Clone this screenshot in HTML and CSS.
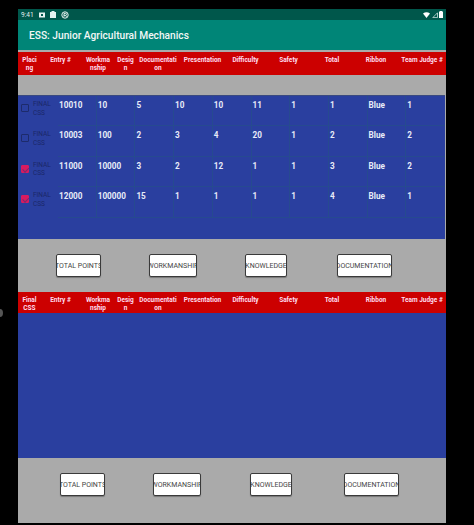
FILE: index.html
```html
<!DOCTYPE html>
<html lang="en">
<head>
    <meta charset="UTF-8">
    <meta name="viewport" content="width=device-width, initial-scale=1.0">
    <title>ESS: Junior Agricultural Mechanics</title>
    <link rel="stylesheet" href="styles.css">
</head>
<body>
    <div class="edge-dot"></div>
    <div class="phone">
        <div class="status-bar">
            <div class="status-left">
                <span>9:41</span>
                <svg width="6" height="6" viewBox="0 0 6 6"><path fill="#e6f2f0" d="M0 .5h6v5H0z"/><path fill="#00574b" d="M2 2h2v2H2z"/></svg>
                <svg width="6" height="7" viewBox="0 0 6 7"><path fill="#e6f2f0" d="M1.500 0h3v1H6v6H0V1h1.500z"/></svg>
                <svg width="8" height="8" viewBox="0 0 8 8"><circle cx="4" cy="4" r="3.200" fill="none" stroke="#e6f2f0"/><path fill="none" stroke="#e6f2f0" d="M3 5.800V2.400h1.500a1 1 0 0 1 0 2H3M4.500 4.400l1 1.400"/></svg>
            </div>
            <div class="status-right">
                <svg width="7" height="6" viewBox="0 0 7 6"><path fill="#fff" d="M0 1.500Q3.500-1 7 1.500L3.500 6z"/></svg>
                <svg width="6" height="6" viewBox="0 0 6 6"><path fill="none" stroke="#cfe3e0" stroke-width=".8" d="M5.500.8v4.800H.8z"/></svg>
                <svg width="4" height="7" viewBox="0 0 4 7"><path fill="#fff" d="M1 0h2v.6h1V7H0V.6h1z"/></svg>
            </div>
        </div>
        <div class="app-bar">ESS: Junior Agricultural Mechanics</div>
        <div class="divider"></div>

        <div class="table-head">
            <div>Placing</div>
            <div>Entry #</div>
            <div>Workmanship</div>
            <div>Design</div>
            <div>Documentation</div>
            <div>Presentation</div>
            <div>Difficulty</div>
            <div>Safety</div>
            <div>Total</div>
            <div>Ribbon</div>
            <div>Team Judge #</div>
        </div>
        <div class="gray-strip"></div>

        <div class="table-body first">
            <div class="row">
                <div class="final"><span class="box"></span><span class="final-label">FINAL CSS</span></div>
                <div>10010</div><div>10</div><div>5</div><div>10</div><div>10</div><div>11</div><div>1</div><div>1</div><div>Blue</div><div>1</div>
            </div>
            <div class="row">
                <div class="final"><span class="box"></span><span class="final-label">FINAL CSS</span></div>
                <div>10003</div><div>100</div><div>2</div><div>3</div><div>4</div><div>20</div><div>1</div><div>2</div><div>Blue</div><div>2</div>
            </div>
            <div class="row">
                <div class="final"><span class="box checked"></span><span class="final-label">FINAL CSS</span></div>
                <div>11000</div><div>10000</div><div>3</div><div>2</div><div>12</div><div>1</div><div>1</div><div>3</div><div>Blue</div><div>2</div>
            </div>
            <div class="row">
                <div class="final"><span class="box checked"></span><span class="final-label">FINAL CSS</span></div>
                <div>12000</div><div>100000</div><div>15</div><div>1</div><div>1</div><div>1</div><div>1</div><div>4</div><div>Blue</div><div>1</div>
            </div>
        </div>

        <div class="button-row top-buttons">
            <button class="sort-btn w-total">TOTAL POINTS</button>
            <button class="sort-btn w-work">WORKMANSHIP</button>
            <button class="sort-btn w-know">KNOWLEDGE</button>
            <button class="sort-btn w-doc">DOCUMENTATION</button>
        </div>

        <div class="table-head second">
            <div>Final CSS</div>
            <div>Entry #</div>
            <div>Workmanship</div>
            <div>Design</div>
            <div>Documentation</div>
            <div>Presentation</div>
            <div>Difficulty</div>
            <div>Safety</div>
            <div>Total</div>
            <div>Ribbon</div>
            <div>Team Judge #</div>
        </div>
        <div class="table-body empty"></div>

        <div class="button-row bottom-buttons">
            <button class="sort-btn w-total">TOTAL POINTS</button>
            <button class="sort-btn w-work">WORKMANSHIP</button>
            <button class="sort-btn w-know">KNOWLEDGE</button>
            <button class="sort-btn w-doc">DOCUMENTATION</button>
        </div>
    </div>
</body>
</html>
```

FILE: styles.css
```css
* {
    margin: 0;
    padding: 0;
    box-sizing: border-box;
    font-family: 'Roboto', sans-serif;
}

body {
    background: #000;
    height: 525px;
    overflow: hidden;
    padding: 9px 28px 2px 18px;
}

.edge-dot {
    position: absolute;
    left: -3px;
    top: 309px;
    width: 6px;
    height: 8px;
    border-radius: 50%;
    background: #555;
}

.phone {
    display: flex;
    flex-direction: column;
    height: 514px;
    background: #aaa;
}

.status-bar {
    height: 11px;
    background: #00574b;
    display: flex;
    justify-content: space-between;
    align-items: center;
    padding: 0 3px 0 3px;
    color: #e6f2f0;
    font-size: 6.5px;
}

.status-left,
.status-right {
    display: flex;
    align-items: center;
}

.status-left {
    gap: 5px;
}

.status-right {
    gap: 1.5px;
}

.app-bar {
    height: 30px;
    background: #008577;
    color: #f2f7f6;
    font-size: 10.2px;
    font-weight: 500;
    display: flex;
    align-items: center;
    padding-left: 11px;
}

.divider {
    height: 2px;
    background: #aaa;
}

.table-head {
    height: 23px;
    background: #cc0000;
    color: #fde;
    font-size: 6.5px;
    font-weight: 700;
    line-height: 8px;
    display: grid;
    grid-template-columns: 23px 39px 36px 19px 46px 43px 43px 43px 44px 44px 48px;
    padding-top: 3.5px;
    text-align: center;
}

.table-head > div {
    padding: 0 1px;
    overflow-wrap: anywhere;
}

/* narrow cells so the long titles break like the original */
.table-head > div:nth-child(1) {
    padding: 0 3px;
}

.table-head > div:nth-child(3) {
    padding: 0 4.500px;
}

.table-head > div:nth-child(5) {
    padding: 0 3px;
}

.table-head.second {
    height: 21px;
}

.gray-strip {
    height: 20px;
    background: #aaa;
}

.table-body {
    background: #2a3f9f;
    height: 144px;
    margin-right: 1px;
    border-top: 1px solid #3a4a80;
}

.table-body.empty {
    height: 145px;
    border-top: 0;
    margin-right: 0;
}

.row {
    height: 30.5px;
    display: grid;
    grid-template-columns: 40px repeat(10, 1fr);
    color: #e8ecf8;
    font-size: 8.2px;
    font-weight: 700;
}

.row:first-child {
    height: 30px;
}

.row > div {
    padding: 4px 0 0 1px;
    border-right: 1px solid #264a90;
    border-bottom: 1px solid #264a90;
}

.row > div:last-child {
    border-right: 0;
}

.row > .final {
    display: flex;
    align-items: flex-start;
    padding: 4px 0 0 3px;
    border: 0;
}

.box {
    width: 8px;
    height: 8px;
    margin-top: 4px;
    flex-shrink: 0;
    border: 1px solid #1d2b6b;
    border-radius: 1px;
}

.box.checked {
    background: #d81b60;
    border-color: #d81b60;
    position: relative;
}

.box.checked::after {
    content: "";
    position: absolute;
    left: 1.5px;
    top: 0;
    width: 2.5px;
    height: 4.5px;
    border: solid #7c2a6e;
    border-width: 0 1px 1px 0;
    transform: rotate(45deg);
}

.final-label {
    margin-left: 4px;
    width: 18px;
    font-size: 6.5px;
    font-weight: 400;
    line-height: 8.5px;
    color: #1a2768;
}

.button-row {
    display: flex;
    align-items: flex-start;
}

.top-buttons {
    height: 53px;
    padding: 15px 0 0 38px;
    gap: 48px;
}

.bottom-buttons {
    flex: 1;
    padding: 15px 0 0 42px;
    gap: 48px;
}

.bottom-buttons .w-know {
    margin-left: 1px;
}

.bottom-buttons .w-doc {
    margin-left: 4px;
}

.top-buttons .w-doc {
    margin-left: 2px;
}

.sort-btn {
    height: 23px;
    background: #fff;
    border: 1.5px solid #3a3a3a;
    border-radius: 2px;
    box-shadow: 0 1px 1px rgba(0, 0, 0, 0.3);
    color: #444;
    font-size: 7px;
    font-weight: 400;
    white-space: nowrap;
    display: flex;
    align-items: center;
    justify-content: center;
    overflow: hidden;
}

.w-total {
    width: 45px;
}

.w-work {
    width: 48px;
}

.w-know {
    width: 42px;
}

.w-doc {
    width: 55px;
}
```
